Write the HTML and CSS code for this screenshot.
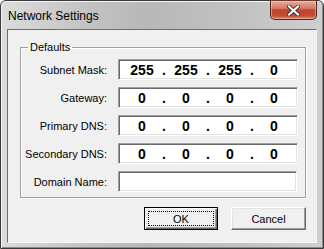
FILE: index.html
```html
<!DOCTYPE html>
<html lang="en">
<head>
  <meta charset="UTF-8" />
  <title>Network Settings</title>
  <link rel="stylesheet" href="styles.css">
</head>
<body>
  <div class="window">
    <!-- Title bar -->
    <div class="titlebar">
      <span class="title">Network Settings</span>
      <button class="close-btn" aria-label="Close">
        <svg width="13" height="11" viewBox="0 0 13 11">
          <path d="M2 1.5 L11 9.5 M11 1.5 L2 9.5" stroke="#3a3a3a" stroke-width="4" stroke-linecap="square" />
          <path d="M2 1.5 L11 9.5 M11 1.5 L2 9.5" stroke="#fff" stroke-width="2" stroke-linecap="square" />
        </svg>
      </button>
    </div>

    <!-- Client area -->
    <div class="client">
      <fieldset class="group">
        <legend>Defaults</legend>
        <div class="form">
          <label>Subnet Mask:</label>
          <div class="ip-field">
            <span class="octet">255</span><span class="dot">.</span>
            <span class="octet">255</span><span class="dot">.</span>
            <span class="octet">255</span><span class="dot">.</span>
            <span class="octet">0</span>
          </div>

          <label>Gateway:</label>
          <div class="ip-field">
            <span class="octet">0</span><span class="dot">.</span>
            <span class="octet">0</span><span class="dot">.</span>
            <span class="octet">0</span><span class="dot">.</span>
            <span class="octet">0</span>
          </div>

          <label>Primary DNS:</label>
          <div class="ip-field">
            <span class="octet">0</span><span class="dot">.</span>
            <span class="octet">0</span><span class="dot">.</span>
            <span class="octet">0</span><span class="dot">.</span>
            <span class="octet">0</span>
          </div>

          <label>Secondary DNS:</label>
          <div class="ip-field">
            <span class="octet">0</span><span class="dot">.</span>
            <span class="octet">0</span><span class="dot">.</span>
            <span class="octet">0</span><span class="dot">.</span>
            <span class="octet">0</span>
          </div>

          <label>Domain Name:</label>
          <input class="text-field" type="text" value="">
        </div>
      </fieldset>

      <div class="buttons">
        <button class="btn btn-default">OK</button>
        <button class="btn">Cancel</button>
      </div>
    </div>
  </div>
</body>
</html>
```

FILE: styles.css
```css
* {
  margin: 0;
  padding: 0;
  box-sizing: border-box;
}

body {
  background: #fff;
  font-family: 'Liberation Sans', Arial, sans-serif;
  font-size: 11px;
  color: #000;
}

/* Window frame */
.window {
  width: 324px;
  height: 249px;
  border: 1px solid #3a3a3a;
  border-radius: 6px 6px 0 0;
  padding: 0 6px 5px 6px;
  background: linear-gradient(90deg, #dcdcdc 0%, #c4c4c4 25%, #b8b8b8 45%, #c2c2c2 75%, #cfcfcf 100%);
  box-shadow: inset 1px 1px 0 #f4f4f4, inset -1px -1px 0 #8a8a8a;
  display: flex;
  flex-direction: column;
}

.titlebar {
  height: 28px;
  display: flex;
  align-items: flex-start;
  justify-content: space-between;
}

.title {
  font-size: 12px;
  line-height: 12px;
  padding: 9px 0 0 1px;
  color: #000;
}

.close-btn {
  width: 47px;
  height: 20px;
  margin-top: -1px;
  border: 1px solid #4e2620;
  border-top-color: #6a3a30;
  border-radius: 0 0 5px 5px;
  background: linear-gradient(#e9a999 0%, #d67a66 40%, #c0432e 50%, #c24a35 80%, #d9826c 100%);
  box-shadow: inset 0 0 0 1px rgba(255, 220, 210, 0.45);
  display: flex;
  align-items: center;
  justify-content: center;
}

/* Client area */
.client {
  flex: 1;
  border: 1px solid;
  border-color: #6e6e6e #f6f6f6 #f6f6f6 #6e6e6e;
  background: #f0f0f0;
  display: flex;
  flex-direction: column;
}

.group {
  margin: 11px 10px 0 12px;
  border: 1px solid #a0a0a0;
  box-shadow: inset 1px 1px 0 #fff, 1px 1px 0 #fff;
  padding: 5px 6px 5px 1px;
}

.group legend {
  margin-left: 6px;
  padding: 0 2px;
  line-height: 13px;
}

.form {
  display: grid;
  grid-template-columns: 85px 180px;
  column-gap: 11px;
  row-gap: 7px;
  align-items: center;
}

.form label {
  text-align: right;
}

/* Sunken fields */
.ip-field,
.text-field {
  height: 21px;
  border: 1px solid;
  border-color: #a0a0a0 #fff #fff #a0a0a0;
  box-shadow: inset 1px 1px 0 #696969, inset -1px -1px 0 #e3e3e3;
  background: #fff;
}

.ip-field {
  display: flex;
  align-items: center;
  padding-left: 4px;
  font-weight: bold;
  font-size: 14px;
}

.octet {
  width: 38px;
  text-align: center;
}

.dot {
  width: 6px;
  text-align: center;
}

.text-field {
  width: 179px;
  outline: none;
}

/* Dialog buttons */
.buttons {
  display: flex;
  justify-content: flex-end;
  gap: 13px;
  margin: 9px 10px 0 0;
}

.btn {
  width: 75px;
  height: 23px;
  font-family: 'Liberation Sans', Arial, sans-serif;
  font-size: 11px;
  color: #000;
  background: #f0f0f0;
  border: 1px solid;
  border-color: #fff #696969 #696969 #fff;
  box-shadow: inset -1px -1px 0 #a0a0a0, inset 1px 1px 0 #e3e3e3;
}

.btn-default {
  width: 74px;
  border-color: #000;
  box-shadow: inset 1px 1px 0 #fff, inset -1px -1px 0 #696969, inset -2px -2px 0 #a0a0a0;
  outline: 1px dotted #000;
  outline-offset: -5px;
}
```
